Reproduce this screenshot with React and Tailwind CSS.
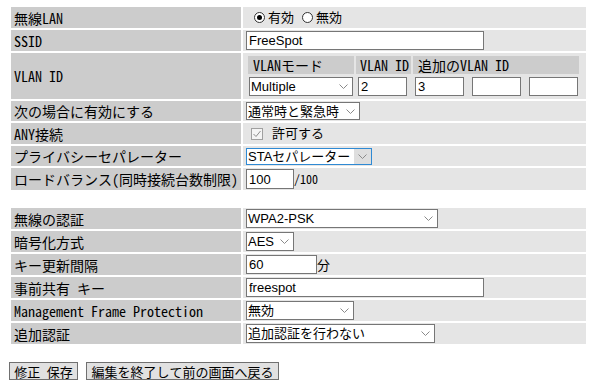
import React from "react";

const mono = "font-['Noto_Sans_Mono_CJK_JP','Noto_Sans_CJK_JP',monospace]";
const sans = "font-['Liberation_Sans','Noto_Sans_CJK_JP',sans-serif]";

const Chevron = () => (
  <svg width="9" height="5" viewBox="0 0 9 5" className="shrink-0">
    <path d="M0.5 0.5 L4.5 4.5 L8.5 0.5" fill="none" stroke="#8a8a8a" strokeWidth="1" />
  </svg>
);

const Select = ({ text, w, h = "h-[19px]" }) => (
  <div
    className={`${w} ${h} ${sans} flex items-center justify-between border border-[#767676] bg-white pl-[1px] pr-[4px] text-[13px] leading-none text-black`}
  >
    <span className="whitespace-nowrap">{text}</span>
    <Chevron />
  </div>
);

const Field = ({ value, w, h = "h-[19px]" }) => (
  <input
    readOnly
    defaultValue={value}
    className={`${w} ${h} ${sans} border border-[#767676] bg-white px-[2px] text-[13px] leading-none text-black outline-none`}
  />
);

const Radio = ({ checked }) => (
  <span className="mx-[3px] ml-[8px] flex h-[11px] w-[11px] items-center justify-center rounded-full border border-[#333333] bg-white">
    {checked && <span className="h-[5px] w-[5px] rounded-full bg-black" />}
  </span>
);

const Row = ({ label, h = "h-[21px]", children }) => (
  <div className={`flex gap-[2px] ${h}`}>
    <div className={`${mono} flex w-[230px] items-center bg-[#cccccc] pl-[3px] text-[14px] leading-none text-black whitespace-nowrap`}>
      {label}
    </div>
    <div className="flex w-[343px] items-center bg-[#e5e5e5] pl-[3px]">{children}</div>
  </div>
);

export default function App() {
  return (
    <div className="h-[388px] w-[594px] overflow-hidden bg-white pt-[5px] pl-[9px] text-black">
      <div className="flex flex-col gap-[2px] p-[2px]">
        <Row label="無線LAN">
          <div className={`${sans} flex items-center text-[13px]`}>
            <Radio checked />
            <span>有効</span>
            <Radio />
            <span>無効</span>
          </div>
        </Row>
        <Row label="SSID">
          <Field value="FreeSpot" w="w-[238px]" />
        </Row>
        <Row label="VLAN ID" h="h-[46px]">
          <div className="flex flex-col gap-[2px] p-[2px]">
            <div className={`${mono} flex h-[18px] gap-[2px] text-[14px] leading-none`}>
              <div className="flex w-[106px] items-center bg-[#cccccc] pl-[5px]">VLANモード</div>
              <div className="flex w-[55px] items-center bg-[#cccccc] pl-[4px]">VLAN ID</div>
              <div className="flex w-[166px] items-center bg-[#cccccc] pl-[5px] whitespace-nowrap">追加のVLAN ID</div>
            </div>
            <div className="flex h-[21px] items-center gap-[2px]">
              <div className="flex w-[106px] items-center pl-[1px]">
                <Select text="Multiple" w="w-[104px]" />
              </div>
              <div className="flex w-[55px] items-center pl-[2px]">
                <Field value="2" w="w-[49px]" />
              </div>
              <div className="flex w-[55px] items-center pl-[2px]">
                <Field value="3" w="w-[49px]" />
              </div>
              <div className="flex w-[55px] items-center pl-[2px]">
                <Field value="" w="w-[49px]" />
              </div>
              <div className="flex w-[52px] items-center pl-[2px]">
                <Field value="" w="w-[49px]" />
              </div>
            </div>
          </div>
        </Row>
        <Row label="次の場合に有効にする" h="h-[20px]">
          <Select text="通常時と緊急時" w="w-[114px]" h="h-[18px]" />
        </Row>
        <Row label="ANY接続">
          <div className="flex items-center">
            <svg width="12" height="12" viewBox="0 0 12 12" className="ml-[5px]">
              <rect x="0.5" y="0.5" width="11" height="11" fill="#f4f4f4" stroke="#a0a0a0" />
              <path d="M2.5 6 L5 8.5 L9.5 3" fill="none" stroke="#8c8c8c" strokeWidth="1" />
            </svg>
            <span className={`${sans} ml-[9px] text-[13px]`}>許可する</span>
          </div>
        </Row>
        <Row label="プライバシーセパレーター" h="h-[20px]">
          <div className={`${sans} flex h-[17px] w-[126px] items-center border border-[#2f8ad4] bg-white text-[13px] leading-none`}>
            <span className="flex-1 pl-[1px] whitespace-nowrap">STAセパレーター</span>
            <span className="flex h-full w-[17px] items-center justify-center bg-[#dedede]">
              <Chevron />
            </span>
          </div>
        </Row>
        <Row label="ロードバランス(同時接続台数制限)" h="h-[22px]">
          <Field value="100" w="w-[48px]" h="h-[20px]" />
          <span className={`${mono} text-[12px]`}>/100</span>
        </Row>
      </div>

      <div className="mt-[14px] flex flex-col gap-[2px] p-[2px]">
        <Row label="無線の認証">
          <Select text="WPA2-PSK" w="w-[192px]" />
        </Row>
        <Row label="暗号化方式">
          <Select text="AES" w="w-[48px]" />
        </Row>
        <Row label="キー更新間隔">
          <Field value="60" w="w-[71px]" />
          <span className={`${mono} text-[13px]`}>分</span>
        </Row>
        <Row label="事前共有 キー">
          <Field value="freespot" w="w-[238px]" />
        </Row>
        <Row label="Management Frame Protection">
          <Select text="無効" w="w-[108px]" />
        </Row>
        <Row label="追加認証">
          <Select text="追加認証を行わない" w="w-[189px]" />
        </Row>
      </div>

      <div className={`${mono} mt-[16px] flex gap-[8px] text-[13px] leading-none`}>
        <button className="flex h-[18px] w-[69px] items-center justify-center border border-[#707070] bg-[#e1e1e1]">
          修正 保存
        </button>
        <button className="flex h-[18px] w-[193px] items-center justify-center border border-[#707070] bg-[#e1e1e1]">
          編集を終了して前の画面へ戻る
        </button>
      </div>
    </div>
  );
}
